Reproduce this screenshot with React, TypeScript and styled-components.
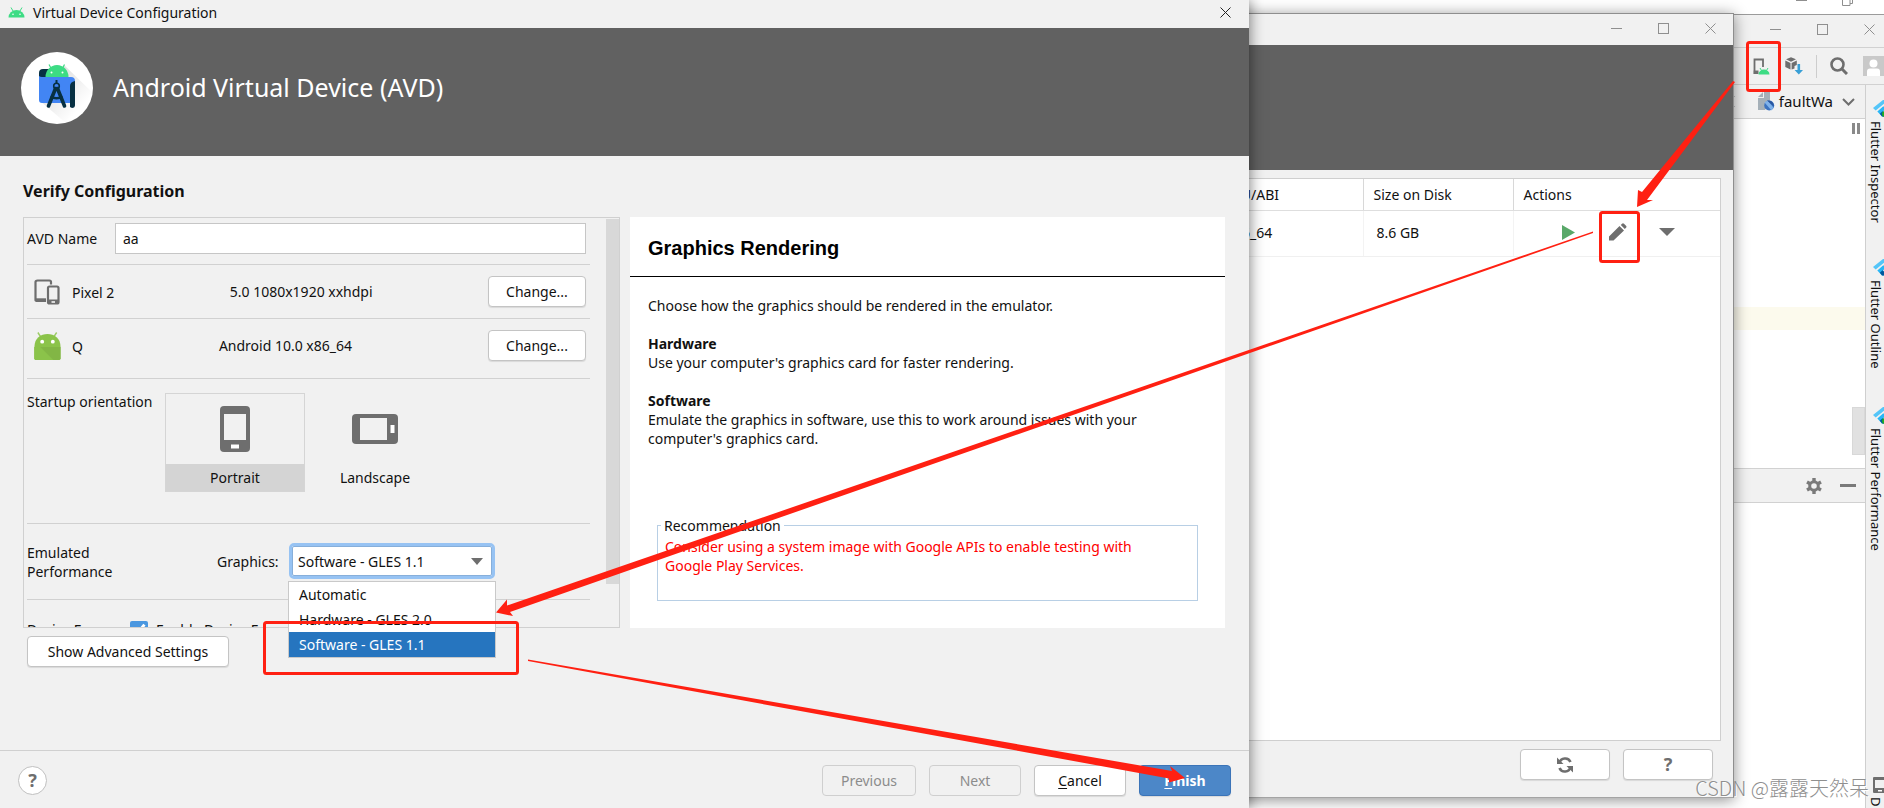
import React, { useState } from 'react';
import styled, { createGlobalStyle, css } from 'styled-components';

const GlobalStyle = createGlobalStyle`
  *, *::before, *::after { box-sizing: border-box; }
  body { margin: 0; background: #fff; }
  body, button, input, select {
    font-family: "Noto Sans", "Open Sans", "Noto Sans CJK SC", sans-serif;
    font-size: 14px;
    line-height: 19px;
    color: #111;
  }
  button { padding: 0; cursor: default; }
  h1, h2, p, ul, fieldset { margin: 0; padding: 0; }
`;

/* ---------- desktop and windows ---------- */

const Desktop = styled.div`
  position: relative;
  min-height: 100vh;
  overflow: hidden;
  background: #fff;
`;

const Win = styled.section`
  position: absolute;
  display: flex;
  flex-direction: column;
  background: #f1f1f1;
`;

const IdeWindow = styled(Win)`
  inset: 14px 0 0 0;
  border-top: 1px solid #9b9b9b;
`;

const ManagerWindow = styled(Win)`
  inset: 13px 150px 10px 600px;
  border: 1px solid #8e8e8e;
  border-bottom-color: #a4a4a4;
  box-shadow: 0 2px 14px rgba(0, 0, 0, 0.45);
`;

const WizardWindow = styled(Win)`
  inset: 0 635px 0 0;
  box-shadow: 0 0 14px rgba(0, 0, 0, 0.55);
`;

const BackControls = styled.div`
  position: absolute;
  top: -5px;
  right: 31px;
  display: flex;
  gap: 35px;
`;

const TitleBar = styled.header<{ $height: number; $end: number; $bottom: number }>`
  display: flex;
  align-items: center;
  flex: none;
  height: ${p => p.$height}px;
  padding: 0 ${p => p.$end}px ${p => p.$bottom}px 8px;
`;

const TitleText = styled.h1`
  flex: 1;
  margin-left: 8px;
  font-size: 14px;
  font-weight: 400;
`;

const Controls = styled.div`
  display: flex;
  gap: 35px;
  margin-left: auto;
`;

const PlainButton = styled.button<{ $size?: number }>`
  display: flex;
  align-items: center;
  justify-content: center;
  flex: none;
  width: ${p => p.$size ?? 12}px;
  height: ${p => p.$size ?? 12}px;
  border: 0;
  background: none;
`;

const Banner = styled.div<{ $height: number }>`
  display: flex;
  align-items: center;
  flex: none;
  gap: 20px;
  height: ${p => p.$height}px;
  padding: 0 21px 8px;
  background: #616161;
`;

const BannerTitle = styled.h2`
  padding-bottom: 2px;
  color: #fff;
  font-size: 25px;
  font-weight: 400;
  line-height: 34px;
`;

/* ---------- wizard body ---------- */

const WizardBody = styled.main`
  flex: 1;
  padding: 23px 24px 0 23px;
`;

const PageTitle = styled.h2`
  margin-bottom: 14px;
  font-size: 16px;
  line-height: 24px;
`;

const Columns = styled.div`
  position: relative;
  display: flex;
  gap: 10px;
`;

const FormPanel = styled.form`
  display: flex;
  flex: none;
  width: 597px;
  height: 411px;
  overflow: hidden;
  border: 1px solid #d0d0d0;
`;

const FormRows = styled.div`
  flex: 1;
  margin: 0 16px 0 3px;
`;

const ScrollThumb = styled.div`
  width: 13px;
  height: 365px;
  margin-top: 1px;
  background: #d8d8d8;
`;

const Row = styled.div<{ $height: number; $top: number }>`
  display: flex;
  align-items: flex-start;
  height: ${p => p.$height}px;
  padding: ${p => p.$top}px 4px 0 0;
  border-bottom: 1px solid #d1d1d1;
`;

const RowLabel = styled.label<{ $width: number; $top?: number }>`
  flex: none;
  width: ${p => p.$width}px;
  padding-top: ${p => p.$top ?? 0}px;
`;

const NameInput = styled.input`
  flex: 1;
  height: 31px;
  padding: 0 7px;
  border: 1px solid #c6c6c6;
  border-radius: 0;
  background: #fff;
  outline: 0;
`;

const SpreadRow = styled(Row)`
  justify-content: space-between;
`;

const DeviceName = styled.div`
  display: flex;
  align-items: center;
  gap: 11px;
  height: 32px;
  padding-left: 7px;
`;

const IconSlot = styled.span`
  display: flex;
  width: 27px;
`;

const RowText = styled.span`
  line-height: 31px;
`;

const Button = styled.button<{ $width: number; $kind?: 'primary' | 'disabled' }>`
  display: flex;
  align-items: center;
  justify-content: center;
  flex: none;
  width: ${p => p.$width}px;
  height: 31px;
  border: 1px solid #c4c4c4;
  border-radius: 4px;
  background: #fff;
  box-shadow: 0 1px 1px rgba(0, 0, 0, 0.1);
  ${p => p.$kind === 'disabled' && css`
    background: #f1f1f1;
    border-color: #cfcfcf;
    box-shadow: none;
    color: #8c8c8c;
  `}
  ${p => p.$kind === 'primary' && css`
    background: #4c87c8;
    border-color: #3b74b8;
    color: #fff;
    font-weight: 700;
  `}
`;

const Mnemonic = styled.span`
  text-decoration: underline;
  text-underline-offset: 2px;
`;

const Tile = styled.label<{ $on: boolean }>`
  display: flex;
  flex-direction: column;
  width: 140px;
  height: 99px;
  margin-top: 1px;
  border: 1px solid ${p => (p.$on ? '#d5d5d5' : 'transparent')};
  text-align: center;
`;

const TileIcon = styled.span`
  display: flex;
  align-items: center;
  justify-content: center;
  flex: 1;
`;

const TileLabel = styled.span<{ $on: boolean }>`
  height: 27px;
  line-height: 27px;
  background: ${p => (p.$on ? '#d4d4d4' : 'none')};
`;

const HiddenRadio = styled.input`
  position: absolute;
  opacity: 0;
  pointer-events: none;
`;

const SelectBox = styled.div`
  display: grid;
  align-items: center;
  width: 206px;
  height: 36px;
  border: 3px solid #97c3f3;
  border-radius: 5px;
  background: #fff;
  & > * { grid-area: 1 / 1; }
  & > svg { justify-self: end; margin-right: 9px; pointer-events: none; }
`;

const Select = styled.select`
  width: 100%;
  height: 30px;
  padding: 0 6px 0 5px;
  border: 1px solid #87afda;
  border-radius: 2px;
  background: none;
  appearance: none;
  outline: 0;
`;

const Popup = styled.ul`
  position: absolute;
  top: 364px;
  left: 265px;
  width: 208px;
  border: 1px solid #c9c9c9;
  background: #fff;
  list-style: none;
`;

const Option = styled.li<{ $on: boolean }>`
  height: 25px;
  padding-left: 10px;
  line-height: 25px;
  background: ${p => (p.$on ? '#2675bf' : '#fff')};
  color: ${p => (p.$on ? '#fff' : '#111')};
`;

const FrameRow = styled.div`
  display: flex;
  gap: 8px;
  padding-top: 20px;
`;

const FrameLabel = styled.label`
  height: 19px;
`;

const FrameCheck = styled.input`
  width: 18px;
  height: 18px;
  margin: 1px 0 0;
  accent-color: #4a97e0;
`;

const HelpPanel = styled.article`
  flex: 1;
  min-height: 411px;
  background: #fff;
`;

const HelpTitle = styled.h2`
  padding: 20px 18px 16px;
  border-bottom: 1px solid #000;
  color: #000;
  font-family: "Liberation Sans", Arial, sans-serif;
  font-size: 20px;
  line-height: 23px;
`;

const HelpText = styled.div`
  display: flex;
  flex-direction: column;
  gap: 19px;
  padding: 19px 18px 0;
`;

const Recommendation = styled.fieldset`
  min-height: 85px;
  margin: 68px 27px 0;
  border: 1px solid #b8cfe5;
`;

const Legend = styled.legend`
  margin-left: 3px;
  padding: 0 3px;
`;

const Warning = styled.p`
  padding: 2px 7px;
  color: #f00;
`;

const AdvancedSlot = styled.div`
  padding: 8px 4px 0;
`;

const WizardFooter = styled.footer`
  display: flex;
  align-items: center;
  gap: 13px;
  flex: none;
  height: 58px;
  padding: 1px 18px 0;
  border-top: 1px solid #d0d0d0;
`;

const RoundHelp = styled.button`
  width: 29px;
  height: 29px;
  margin-right: auto;
  border: 1px solid #c0c0c0;
  border-radius: 50%;
  background: #fff;
  color: #6e6e6e;
  font-size: 18px;
  font-weight: 700;
  line-height: 26px;
`;

/* ---------- device manager ---------- */

const TablePanel = styled.div`
  flex: 1;
  margin: 8px 12px 0 0;
  border: 1px solid #cfcfcf;
  background: #fff;
`;

const Table = styled.table`
  width: 100%;
  table-layout: fixed;
  border-collapse: collapse;
`;

const Th = styled.th<{ $width?: number }>`
  width: ${p => (p.$width ? `${p.$width}px` : 'auto')};
  height: 31px;
  padding: 0 10px;
  border-bottom: 1px solid #dedede;
  border-left: 1px solid #d8d8d8;
  font-weight: 400;
  text-align: left;
`;

const Td = styled.td`
  height: 46px;
  padding: 0 13px 2px;
  border-bottom: 1px solid #f0f0f0;
  border-left: 1px solid #f3f3f3;
`;

const Actions = styled.div`
  display: flex;
  gap: 25px;
  padding-left: 30px;
`;

const ManagerFooter = styled.footer`
  display: flex;
  justify-content: flex-end;
  gap: 13px;
  flex: none;
  height: 56px;
  padding: 8px 20px 0;
`;

const QuestionMark = styled.span`
  color: #6e6e6e;
  font-size: 18px;
  font-weight: 700;
`;

/* ---------- IDE ---------- */

const Toolbar = styled.div`
  display: flex;
  align-items: center;
  justify-content: flex-end;
  flex: none;
  height: 38px;
  border-top: 1px solid #d1d1d1;
  border-bottom: 1px solid #d1d1d1;
`;

const ToolGroup = styled.div`
  display: flex;
  align-items: center;
  gap: 15px;
  margin-right: 13px;
  & > svg { margin-right: 2px; }
`;

const Divider = styled.span`
  width: 1px;
  height: 23px;
  margin-right: 13px;
  background: #cdcdcd;
`;

const SearchSlot = styled.span`
  display: flex;
  margin-right: 15px;
`;

const IdeMain = styled.div`
  display: flex;
  flex: 1;
  min-height: 0;
`;

const IdeCenter = styled.div`
  display: flex;
  flex-direction: column;
  flex: 1;
`;

const TabRow = styled.div`
  display: flex;
  align-items: center;
  justify-content: flex-end;
  flex: none;
  gap: 4px;
  height: 34px;
  padding-right: 10px;
  border-bottom: 1px solid #d1d1d1;
  font-size: 15px;
`;

const TabClose = styled.span`
  display: flex;
  margin-right: 18px;
`;

const TabMore = styled.span`
  display: flex;
  margin-left: 5px;
`;

const Editor = styled.div`
  position: relative;
  flex: none;
  height: 349px;
  background: #fff;
`;

const EditorTools = styled.div`
  display: flex;
  justify-content: flex-end;
  height: 188px;
  padding: 4px 5px 0 0;
`;

const CaretLine = styled.div`
  height: 23px;
  background: #fcfaed;
`;

const EditorThumb = styled.div`
  position: absolute;
  top: 288px;
  right: 0;
  width: 13px;
  height: 48px;
  border: 1px solid #d8d8d8;
  background: #e1e1e1;
`;

const ToolHeader = styled.div`
  display: flex;
  align-items: center;
  justify-content: flex-end;
  flex: none;
  gap: 18px;
  height: 35px;
  padding-right: 9px;
  border-top: 1px solid #d1d1d1;
  border-bottom: 1px solid #d1d1d1;
`;

const ToolContent = styled.div`
  flex: 1;
  background: #fff;
`;

const SideStrip = styled.nav`
  display: flex;
  flex-direction: column;
  flex: none;
  width: 19px;
  padding: 15px 0 0;
  overflow: hidden;
  border-left: 1px solid #cfcfcf;
`;

const SideTab = styled.button<{ $height: number; $last?: boolean }>`
  display: flex;
  flex-direction: column;
  align-items: flex-start;
  flex: none;
  gap: 4px;
  width: 18px;
  height: ${p => p.$height}px;
  margin-top: ${p => (p.$last ? 'auto' : 0)};
  border: 0;
  background: none;
  & > svg { flex: none; margin-left: 7px; }
`;

const SideLabel = styled.span`
  margin-left: 2px;
  font-size: 13px;
  line-height: 16px;
  white-space: nowrap;
  writing-mode: vertical-rl;
`;

/* ---------- overlays ---------- */

const Markup = styled.svg`
  position: absolute;
  inset: 0;
  width: 100%;
  height: 100%;
  pointer-events: none;
`;

const Watermark = styled.div`
  position: absolute;
  right: 15px;
  bottom: 6px;
  color: #8f8f8f;
  font-family: "Noto Sans CJK SC", sans-serif;
  font-size: 20px;
  font-weight: 300;
  line-height: 28px;
  text-shadow: 1px 1px 0 #fff;
`;

/* ---------- icons ---------- */

const Minimize = () => (
  <svg width="11" height="11" viewBox="0 0 11 11"><path d="M0 5.5h11" stroke="#8f8f8f" /></svg>
);
const Maximize = () => (
  <svg width="11" height="11" viewBox="0 0 11 11"><rect x=".5" y=".5" width="10" height="10" fill="none" stroke="#8f8f8f" /></svg>
);
const Restore = () => (
  <svg width="11" height="11" viewBox="0 0 11 11"><path d="M.5 2.500h7.500v8H.5zM2.500 2.500V.5h8v8H8" fill="none" stroke="#8f8f8f" /></svg>
);
const Close = ({ color = '#8f8f8f' }: { color?: string }) => (
  <svg width="11" height="11" viewBox="0 0 11 11"><path d="M.5.5l10 10M10.500.5l-10 10" stroke={color} fill="none" /></svg>
);

const DroidHead = () => (
  <svg width="17" height="11" viewBox="0 0 17 11">
    <path d="M.5 10.500a8 7.500 0 0 1 16 0z" fill="#3ddc84" />
    <path d="M3 .5l2 3.500M14 .5l-2 3.500" stroke="#3ddc84" strokeWidth="1" />
    <circle cx="5" cy="7.300" r=".8" fill="#fff" /><circle cx="12" cy="7.300" r=".8" fill="#fff" />
  </svg>
);

const StudioLogo = () => (
  <svg width="72" height="72" viewBox="0 0 72 72" aria-hidden="true">
    <defs>
      <linearGradient id="long" x1="0" y1="0" x2="1" y2="1">
        <stop offset="0" stopColor="#000" stopOpacity=".18" />
        <stop offset=".75" stopColor="#000" stopOpacity="0" />
      </linearGradient>
      <clipPath id="disc"><circle cx="36" cy="36" r="36" /></clipPath>
    </defs>
    <circle cx="36" cy="36" r="36" fill="#fff" />
    <path d="M43 13l29 28v31H46L18 48z" fill="url(#long)" clipPath="url(#disc)" />
    <path d="M18 26v-5a4 4 0 0 1 4-4h8v9z" fill="#073042" />
    <path d="M18 24q1 1 3 1h29q4 0 4 4v22H21q-3 0-3-3z" fill="#4285f4" />
    <path d="M49 55V34q0-4 5-5v24q0 3-3 3z" fill="#073042" />
    <path d="M24.500 25a11.500 12 0 0 1 23 0z" fill="#3ddc84" />
    <path d="M28 12.500l2.500 4.500M43.500 12.500L41 17" stroke="#3ddc84" strokeWidth="1.200" />
    <circle cx="30.500" cy="20.500" r="1" fill="#fff" /><circle cx="41.500" cy="20.500" r="1" fill="#fff" />
    <path d="M35.500 28v4" stroke="#073042" strokeWidth="2" />
    <circle cx="35.500" cy="34" r="2.800" fill="none" stroke="#073042" strokeWidth="1.600" />
    <path d="M34.500 36.500L27.500 54M36.500 36.500l7 17.500" stroke="#073042" strokeWidth="3.600" strokeLinecap="round" />
    <path d="M29.500 44.500q6 3.500 12 0" stroke="#073042" strokeWidth="2.600" fill="none" />
  </svg>
);

const DevicesIcon = () => (
  <svg width="26" height="26" viewBox="0 0 26 26" fill="none" stroke="#6e6e6e">
    <path d="M17 5.500V3q0-1.500-1.500-1.500h-12Q1.500 1.500 1.500 3v18q0 1 2 1H12" strokeWidth="2.200" />
    <path d="M2 20.800h10" strokeWidth="3" />
    <rect x="14" y="7.500" width="10.500" height="17" rx="1.500" strokeWidth="2.200" />
    <path d="M14 22.500h10.500" strokeWidth="4" /><path d="M17.500 23h3.500" stroke="#fff" strokeWidth="1.500" />
  </svg>
);

const DroidBlock = () => (
  <svg width="28" height="30" viewBox="0 0 28 30">
    <path d="M4 1l4 6M23.500 1l-4 6" stroke="#9ccc65" strokeWidth="1.500" />
    <path d="M.5 15.500C.5 7 7 2.500 14 2.500S27.500 7 27.500 15.500V28q0 1.500-1.500 1.500H2Q.5 29.500.5 28z" fill="#8bc34a" />
    <path d="M.5 16h27v12q0 1.500-1.500 1.500H2Q.5 29.500.5 28z" fill="#82b645" />
    <path d="M.5 16h6L20 29.500H2Q.5 29.500.5 28z" fill="#8bc34a" />
    <circle cx="8.500" cy="10.500" r="2" fill="#fff" /><circle cx="19.500" cy="10.500" r="2" fill="#fff" />
  </svg>
);

const PortraitIcon = () => (
  <svg width="30" height="46" viewBox="0 0 30 46">
    <rect width="30" height="46" rx="4" fill="#6e6e6e" />
    <path d="M4 8h22v26H4z" fill="#f1f1f1" /><path d="M11 38.500h8v4h-8z" fill="#fff" />
  </svg>
);

const LandscapeIcon = () => (
  <svg width="46" height="30" viewBox="0 0 46 30">
    <rect width="46" height="30" rx="4" fill="#6e6e6e" />
    <path d="M8 4h27v22H8z" fill="#f1f1f1" /><path d="M38.500 11h4v8h-4z" fill="#fff" />
  </svg>
);

const DownTriangle = ({ w, h }: { w: number; h: number }) => (
  <svg width={w} height={h} viewBox="0 0 16 8" preserveAspectRatio="none"><path d="M0 0h16L8 8z" fill="#6e6e6e" /></svg>
);

const PlayIcon = () => (
  <svg width="13" height="15" viewBox="0 0 13 15"><path d="M0 0l13 7.500L0 15z" fill="#59a869" /></svg>
);

const PencilIcon = () => (
  <svg width="18" height="18" viewBox="0 0 18 18" fill="#6e6e6e">
    <path d="M0 13.500L10.500 3l4.500 4.500L4.500 17.500H0zM11.800 2L13 .8q1-1 2 0l2 2q1 1 0 2l-1.200 1.200z" />
  </svg>
);

const RefreshIcon = () => (
  <svg width="18" height="16" viewBox="0 0 18 16" fill="none" stroke="#6e6e6e" strokeWidth="2.600">
    <path d="M3.500 6A5.800 5.800 0 0 1 14.500 5M14.500 10A5.800 5.800 0 0 1 3.500 11" />
    <path d="M1 .5V7h6.500zM17 15.500V9h-6.500z" fill="#6e6e6e" stroke="none" />
  </svg>
);

const EdgeIcon = () => (
  <svg width="16" height="16" viewBox="0 0 16 16"><rect x="1" y="1" width="13" height="13" fill="none" stroke="#6e6e6e" strokeWidth="2" /></svg>
);

const AvdIcon = () => (
  <svg width="17" height="17" viewBox="0 0 17 17">
    <path d="M5 15.200H1.500V1.500h8.500V9" fill="none" stroke="#6e6e6e" strokeWidth="1.800" />
    <path d="M.7 12.500h4.800v3.500H.7z" fill="#6e6e6e" />
    <path d="M5.500 16.500a5.500 5 0 0 1 11 0z" fill="#3ddc84" />
    <path d="M7 10l1.500 2.500M15 10l-1.500 2.500" stroke="#3ddc84" />
  </svg>
);

const SdkIcon = () => (
  <svg width="18" height="18" viewBox="0 0 18 18">
    <path d="M6 .3l5 2-5 2.400-5-2.400zM.3 3.500L5.500 6v6.500L.3 10zM6.600 6l5.200-2.500V8L9.500 9v2.500l-2.900 1z" fill="#6e6e6e" />
    <path d="M12.500 7h2.600v6H18l-4.200 4.500L9.600 13h2.900z" fill="#389fd6" />
  </svg>
);

const SearchIcon = () => (
  <svg width="18" height="18" viewBox="0 0 18 18" fill="none" stroke="#6e6e6e">
    <circle cx="7.500" cy="7.500" r="6" strokeWidth="2.600" /><path d="M12 12l5 5" strokeWidth="3" />
  </svg>
);

const UserIcon = () => (
  <svg width="21" height="20" viewBox="0 0 21 20">
    <path d="M0 0h21v20H0z" fill="#c9c9c9" />
    <circle cx="10.500" cy="7.500" r="4" fill="#fff" />
    <path d="M4 20v-4.500q0-3 3-3h7q3 0 3 3V20z" fill="#fff" />
  </svg>
);

const DartFile = () => (
  <svg width="18" height="19" viewBox="0 0 18 19">
    <path d="M7 0h6v9l-5 9H1V6h6z" fill="#a5b0b8" /><path d="M6 0v5H1z" fill="#a5b0b8" />
    <circle cx="12.200" cy="13.500" r="5" fill="#3b73c0" />
    <path d="M7.500 10.500l3-2 6 7-2 3z" fill="#7fb2ea" />
    <path d="M10 8.500q6-1 7 6z" fill="#2a559e" />
  </svg>
);

const Chevron = () => (
  <svg width="13" height="8" viewBox="0 0 13 8"><path d="M1 1l5.500 5.500L12 1" fill="none" stroke="#6e6e6e" strokeWidth="2" /></svg>
);

const PauseIcon = () => (
  <svg width="8" height="11" viewBox="0 0 8 11"><path d="M0 0h3v11H0zM5 0h3v11H5z" fill="#8a8a8a" /></svg>
);

const GearIcon = () => (
  <svg width="16" height="16" viewBox="0 0 16 16" fill="none" stroke="#7a7a7a">
    <circle cx="8" cy="8" r="4.300" strokeWidth="3" />
    <path d="M8 0v3M8 13v3M1 4l2.700 1.500M12.300 10.500L15 12M1 12l2.700-1.500M12.300 5.500L15 4" strokeWidth="3.400" />
  </svg>
);

const HideIcon = () => (
  <svg width="16" height="3" viewBox="0 0 16 3"><path d="M0 0h16v3H0z" fill="#7a7a7a" /></svg>
);

const FlutterIcon = ({ badge }: { badge?: boolean }) => (
  <svg width="16" height="17" viewBox="0 0 16 17">
    <path d="M10 0h5.500L2.700 10.500 0 8z" fill="#54c5f8" />
    <path d="M10 6.500h5.500L10 11.500l4.500 5H9L4.300 11.500z" fill="#29b6f6" />
    <path d="M6.800 13.800l2.700-2.500L14.500 16.500H9z" fill="#01579b" />
    {badge && <circle cx="12" cy="14" r="3" fill="#1fb01f" />}
  </svg>
);

const PhoneIcon = () => (
  <svg width="14" height="16" viewBox="0 0 14 16">
    <rect width="14" height="16" rx="1" fill="#6e6e6e" /><path d="M2 3h10v8H2z" fill="#f1f1f1" /><path d="M5 13h4v1.500H5z" fill="#fff" />
  </svg>
);

/* ---------- parts ---------- */

const WindowControls = () => (
  <Controls>
    <PlainButton aria-label="Minimize"><Minimize /></PlainButton>
    <PlainButton aria-label="Maximize"><Maximize /></PlainButton>
    <PlainButton aria-label="Close"><Close /></PlainButton>
  </Controls>
);

const Ide = () => (
  <IdeWindow>
    <TitleBar $height={32} $end={9} $bottom={4}><WindowControls /></TitleBar>
    <Toolbar>
      <ToolGroup>
        <EdgeIcon />
        <PlainButton $size={18} aria-label="AVD Manager"><AvdIcon /></PlainButton>
        <PlainButton $size={18} aria-label="SDK Manager"><SdkIcon /></PlainButton>
      </ToolGroup>
      <Divider />
      <SearchSlot><PlainButton $size={18} aria-label="Search"><SearchIcon /></PlainButton></SearchSlot>
      <UserIcon />
    </Toolbar>
    <IdeMain>
      <IdeCenter>
        <TabRow>
          <TabClose><Close /></TabClose>
          <DartFile />
          <span>faultWa</span>
          <TabMore><Chevron /></TabMore>
        </TabRow>
        <Editor>
          <EditorTools><PauseIcon /></EditorTools>
          <CaretLine />
          <EditorThumb />
        </Editor>
        <ToolHeader>
          <PlainButton $size={16} aria-label="Options"><GearIcon /></PlainButton>
          <PlainButton $size={16} aria-label="Hide"><HideIcon /></PlainButton>
        </ToolHeader>
        <ToolContent />
      </IdeCenter>
      <SideStrip>
        <SideTab $height={159}><FlutterIcon badge /><SideLabel>Flutter Inspector</SideLabel></SideTab>
        <SideTab $height={148}><FlutterIcon /><SideLabel>Flutter Outline</SideLabel></SideTab>
        <SideTab $height={148}><FlutterIcon badge /><SideLabel>Flutter Performance</SideLabel></SideTab>
        <SideTab $height={31} $last><PhoneIcon /><SideLabel>D</SideLabel></SideTab>
      </SideStrip>
    </IdeMain>
  </IdeWindow>
);

const DeviceManager = () => (
  <ManagerWindow>
    <TitleBar $height={31} $end={17} $bottom={2}><WindowControls /></TitleBar>
    <Banner $height={125} />
    <TablePanel>
      <Table>
        <thead>
          <tr>
            <Th />
            <Th $width={150}>CPU/ABI</Th>
            <Th $width={150}>Size on Disk</Th>
            <Th $width={207}>Actions</Th>
          </tr>
        </thead>
        <tbody>
          <tr>
            <Td />
            <Td>x86_64</Td>
            <Td>8.6 GB</Td>
            <Td>
              <Actions>
                <PlainButton $size={24} aria-label="Launch"><PlayIcon /></PlainButton>
                <PlainButton $size={24} aria-label="Edit"><PencilIcon /></PlainButton>
                <PlainButton $size={24} aria-label="More"><DownTriangle w={16} h={8} /></PlainButton>
              </Actions>
            </Td>
          </tr>
        </tbody>
      </Table>
    </TablePanel>
    <ManagerFooter>
      <Button $width={90} aria-label="Refresh"><RefreshIcon /></Button>
      <Button $width={90}><QuestionMark>?</QuestionMark></Button>
    </ManagerFooter>
  </ManagerWindow>
);

const MODES = ['Automatic', 'Hardware - GLES 2.0', 'Software - GLES 1.1'];

const Wizard = () => {
  const [mode, setMode] = useState(MODES[2]);
  const [orientation, setOrientation] = useState('Portrait');
  return (
    <WizardWindow>
      <TitleBar $height={28} $end={18} $bottom={4}>
        <DroidHead />
        <TitleText>Virtual Device Configuration</TitleText>
        <PlainButton aria-label="Close"><Close color="#222" /></PlainButton>
      </TitleBar>
      <Banner $height={128}>
        <StudioLogo />
        <BannerTitle>Android Virtual Device (AVD)</BannerTitle>
      </Banner>
      <WizardBody>
        <PageTitle>Verify Configuration</PageTitle>
        <Columns>
          <FormPanel>
            <FormRows>
              <Row $height={47} $top={5}>
                <RowLabel $width={88} $top={6} htmlFor="avd-name">AVD Name</RowLabel>
                <NameInput id="avd-name" defaultValue="aa" />
              </Row>
              <SpreadRow $height={54} $top={11}>
                <DeviceName><IconSlot><DevicesIcon /></IconSlot>Pixel 2</DeviceName>
                <RowText>5.0 1080x1920 xxhdpi</RowText>
                <Button type="button" $width={98}>Change...</Button>
              </SpreadRow>
              <SpreadRow $height={60} $top={11}>
                <DeviceName><IconSlot><DroidBlock /></IconSlot>Q</DeviceName>
                <RowText>Android 10.0 x86_64</RowText>
                <Button type="button" $width={98}>Change...</Button>
              </SpreadRow>
              <Row $height={145} $top={13}>
                <RowLabel as="span" $width={138}>Startup orientation</RowLabel>
                {['Portrait', 'Landscape'].map(name => (
                  <Tile key={name} $on={orientation === name}>
                    <HiddenRadio type="radio" name="orientation" checked={orientation === name} onChange={() => setOrientation(name)} />
                    <TileIcon>{name === 'Portrait' ? <PortraitIcon /> : <LandscapeIcon />}</TileIcon>
                    <TileLabel $on={orientation === name}>{name}</TileLabel>
                  </Tile>
                ))}
              </Row>
              <Row $height={76} $top={19}>
                <RowLabel as="span" $width={190}>Emulated<br />Performance</RowLabel>
                <RowLabel $width={72} $top={9} htmlFor="graphics">Graphics:</RowLabel>
                <SelectBox>
                  <Select id="graphics" value={mode} onChange={e => setMode(e.target.value)}>
                    {MODES.map(m => <option key={m}>{m}</option>)}
                  </Select>
                  <DownTriangle w={12} h={7} />
                </SelectBox>
              </Row>
              <FrameRow>
                <RowLabel as="span" $width={95}>Device Frame</RowLabel>
                <FrameCheck type="checkbox" id="frame" defaultChecked />
                <FrameLabel htmlFor="frame">Enable Device Frame</FrameLabel>
              </FrameRow>
            </FormRows>
            <ScrollThumb />
          </FormPanel>
          <HelpPanel>
            <HelpTitle>Graphics Rendering</HelpTitle>
            <HelpText>
              <p>Choose how the graphics should be rendered in the emulator.</p>
              <p><b>Hardware</b><br />Use your computer's graphics card for faster rendering.</p>
              <p><b>Software</b><br />Emulate the graphics in software, use this to work around issues with your<br />computer's graphics card.</p>
            </HelpText>
            <Recommendation>
              <Legend>Recommendation</Legend>
              <Warning>Consider using a system image with Google APIs to enable testing with<br />Google Play Services.</Warning>
            </Recommendation>
          </HelpPanel>
          <Popup role="listbox" aria-label="Graphics">
            {MODES.map(m => (
              <Option key={m} role="option" aria-selected={m === mode} $on={m === mode} onClick={() => setMode(m)}>{m}</Option>
            ))}
          </Popup>
        </Columns>
        <AdvancedSlot><Button $width={202}>Show Advanced Settings</Button></AdvancedSlot>
      </WizardBody>
      <WizardFooter>
        <RoundHelp>?</RoundHelp>
        <Button $width={94} $kind="disabled" disabled>Previous</Button>
        <Button $width={92} $kind="disabled" disabled>Next</Button>
        <Button $width={92}><span><Mnemonic>C</Mnemonic>ancel</span></Button>
        <Button $width={92} $kind="primary"><span><Mnemonic>F</Mnemonic>inish</span></Button>
      </WizardFooter>
    </WizardWindow>
  );
};

const App = () => (
  <>
    <GlobalStyle />
    <Desktop>
      <BackControls>
        <Minimize />
        <Restore />
      </BackControls>
      <Ide />
      <DeviceManager />
      <Wizard />
      <Watermark>CSDN @露露天然呆</Watermark>
      <Markup viewBox="0 0 1884 808" preserveAspectRatio="none" aria-hidden="true">
        <g fill="#ff2012">
          <path d="M1733 81l2 1-88 118 6 0-16 7 1-17 4 2z" />
          <path d="M1593 231.500v1.500L510 612l3 4-17-3.500 11-13 0 6z" />
          <path d="M528 659.500L1172 771l-2-5 15 12-16 4.500 0-4L528 661z" />
        </g>
        <g fill="none" stroke="#ff2012" strokeWidth="3">
          <rect x="1747.500" y="42.500" width="32" height="48" rx="2" />
          <rect x="1600.500" y="212.500" width="38" height="49" rx="2" />
          <rect x="264.500" y="622.500" width="253" height="51" rx="2" />
        </g>
      </Markup>
    </Desktop>
  </>
);

export default App;
